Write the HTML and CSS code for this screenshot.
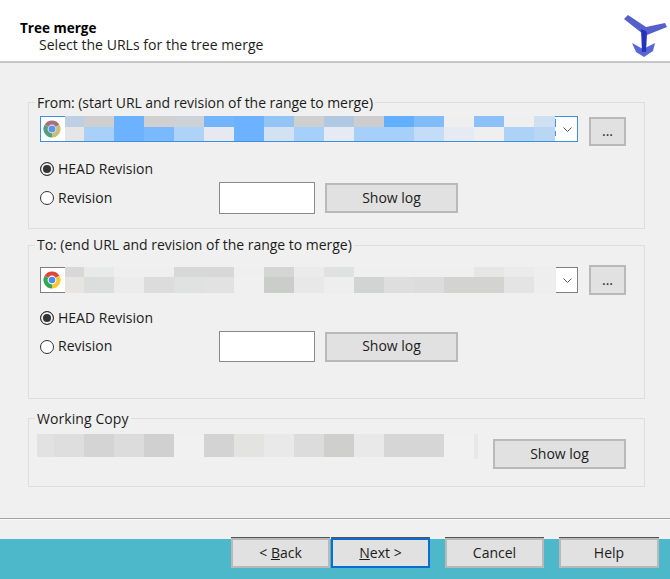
FILE: index.html
```html
<!DOCTYPE html>
<html lang="en">
<head>
<meta charset="utf-8">
<title>Tree merge</title>
<link rel="stylesheet" href="styles.css">
</head>
<body>
<div class="wizard">
  <header class="header">
    <div class="heading">
      <div class="title">Tree merge</div>
      <div class="subtitle">Select the URLs for the tree merge</div>
    </div>
    <svg class="logo" width="44" height="44" viewBox="0 0 44 44">
      <path class="logo-arm" d="M0 5 L4 1 L22 13 L41 9 L43 13 L23 21 L19 20 Z"/>
      <path class="logo-head" d="M8 29 L19 35 L31 29 L29 37 L20 43 L12 38 Z"/>
      <path class="logo-stem" d="M17 15 L22 17 L23 19 L22 38 L18 38 Z"/>
    </svg>
  </header>

  <main class="content">
    <section class="group group-from">
      <div class="legend legend-from">From: (start URL and revision of the range to merge)</div>
      <div class="url-row row-from">
        <div class="combo combo-focus">
          <span class="combo-icon">
            <svg class="chrome chrome-muted" width="24" height="24" viewBox="0 0 24 24">
              <path class="c-red" d="M11 12 L3.6 7.75 A8.5 8.5 0 0 1 18.4 7.75 Z"/>
              <path class="c-green" d="M11 12 L3.6 7.75 A8.5 8.5 0 0 0 11 20.5 Z"/>
              <path class="c-yellow" d="M11 12 L18.4 7.75 A8.5 8.5 0 0 1 11 20.5 Z"/>
              <circle class="c-ring" cx="11" cy="12" r="4.4"/>
              <circle class="c-blue" cx="11" cy="12" r="3.3"/>
            </svg>
          </span>
          <svg class="mosaic mosaic-from" width="492" height="25" viewBox="0 0 492 25" shape-rendering="crispEdges">
            <rect x="0" y="0" width="19" height="11" fill="#bfcfe3"/><rect x="19" y="0" width="30" height="11" fill="#cfcfcf"/><rect x="49" y="0" width="30" height="11" fill="#6cb2ff"/><rect x="79" y="0" width="30" height="11" fill="#d0d0d0"/><rect x="109" y="0" width="30" height="11" fill="#cdd2d8"/><rect x="139" y="0" width="30" height="11" fill="#72b5fc"/><rect x="169" y="0" width="30" height="11" fill="#6cb2ff"/><rect x="199" y="0" width="30" height="11" fill="#94c4f5"/><rect x="229" y="0" width="30" height="11" fill="#cfcfcf"/><rect x="259" y="0" width="30" height="11" fill="#b0c9e3"/><rect x="289" y="0" width="30" height="11" fill="#cdcdcd"/><rect x="319" y="0" width="30" height="11" fill="#62aeff"/><rect x="349" y="0" width="30" height="11" fill="#80bcfa"/><rect x="379" y="0" width="30" height="11" fill="#efefef"/><rect x="409" y="0" width="30" height="11" fill="#8bc0f8"/><rect x="439" y="0" width="30" height="11" fill="#efefef"/><rect x="469" y="0" width="21" height="11" fill="#cfe0f3"/>
            <rect x="0" y="11" width="19" height="14" fill="#e6e6e6"/><rect x="19" y="11" width="30" height="14" fill="#a9d0f9"/><rect x="49" y="11" width="30" height="14" fill="#6cb2ff"/><rect x="79" y="11" width="30" height="14" fill="#7ab9fd"/><rect x="109" y="11" width="30" height="14" fill="#aed2f8"/><rect x="139" y="11" width="30" height="14" fill="#e6eaf0"/><rect x="169" y="11" width="30" height="14" fill="#6cb2ff"/><rect x="199" y="11" width="30" height="14" fill="#d3e2f2"/><rect x="229" y="11" width="30" height="14" fill="#a6cff9"/><rect x="259" y="11" width="30" height="14" fill="#e6ebf3"/><rect x="289" y="11" width="60" height="14" fill="#a6cff9"/><rect x="349" y="11" width="30" height="14" fill="#c3dcf7"/><rect x="379" y="11" width="30" height="14" fill="#e6ebf3"/><rect x="409" y="11" width="30" height="14" fill="#efefef"/><rect x="439" y="11" width="30" height="14" fill="#aed2f7"/><rect x="469" y="11" width="21" height="14" fill="#b9d6f5"/>
            <rect x="490" y="3" width="1" height="8" fill="#3c96ff"/><rect x="490" y="15" width="1" height="5" fill="#3c96ff"/>
          </svg>
          <span class="combo-arrow"><svg width="9" height="5" viewBox="0 0 9 5"><path class="chevron" d="M.5 .5 L4.5 4.5 L8.5 .5"/></svg></span>
        </div>
        <button class="btn btn-more"><span class="btn-text">...</span></button>
      </div>
      <div class="radio-row">
        <label class="radio-label"><input class="radio" type="radio" name="from" checked><span class="radio-text">HEAD Revision</span></label>
      </div>
      <div class="revision-row">
        <label class="radio-label revision-label"><input class="radio" type="radio" name="from"><span class="radio-text">Revision</span></label>
        <input class="edit edit-from" type="text">
        <button class="btn btn-log"><span class="btn-text">Show log</span></button>
      </div>
    </section>

    <section class="group group-to">
      <div class="legend legend-to">To: (end URL and revision of the range to merge)</div>
      <div class="url-row row-to">
        <div class="combo combo-idle">
          <span class="combo-icon">
            <svg class="chrome" width="24" height="24" viewBox="0 0 24 24">
              <path class="c-red" d="M11 12 L3.6 7.75 A8.5 8.5 0 0 1 18.4 7.75 Z"/>
              <path class="c-green" d="M11 12 L3.6 7.75 A8.5 8.5 0 0 0 11 20.5 Z"/>
              <path class="c-yellow" d="M11 12 L18.4 7.75 A8.5 8.5 0 0 1 11 20.5 Z"/>
              <circle class="c-ring" cx="11" cy="12" r="4.4"/>
              <circle class="c-blue" cx="11" cy="12" r="3.3"/>
            </svg>
          </span>
          <svg class="mosaic mosaic-to" width="492" height="26" viewBox="0 0 492 26" shape-rendering="crispEdges">
            <rect x="0" y="0" width="19" height="10" fill="#d8d8d8"/><rect x="19" y="0" width="30" height="10" fill="#e8eaea"/><rect x="49" y="0" width="60" height="10" fill="#efefef"/><rect x="109" y="0" width="60" height="10" fill="#d8d8d8"/><rect x="169" y="0" width="30" height="10" fill="#efefef"/><rect x="199" y="0" width="30" height="10" fill="#d5d5d5"/><rect x="229" y="0" width="30" height="10" fill="#ebebeb"/><rect x="259" y="0" width="30" height="10" fill="#e0e2e1"/><rect x="289" y="0" width="120" height="10" fill="#efefef"/><rect x="409" y="0" width="30" height="10" fill="#e6e6e6"/><rect x="439" y="0" width="30" height="10" fill="#ebebeb"/><rect x="469" y="0" width="22" height="10" fill="#eeeeee"/>
            <rect x="0" y="10" width="19" height="16" fill="#e6e5e2"/><rect x="19" y="10" width="30" height="16" fill="#dcdedd"/><rect x="49" y="10" width="30" height="16" fill="#ececec"/><rect x="79" y="10" width="30" height="16" fill="#dcdcdc"/><rect x="109" y="10" width="30" height="16" fill="#e0e1e1"/><rect x="139" y="10" width="30" height="16" fill="#e2e2e2"/><rect x="169" y="10" width="30" height="16" fill="#f0f0f0"/><rect x="199" y="10" width="30" height="16" fill="#cbcdcb"/><rect x="229" y="10" width="30" height="16" fill="#e8e8e8"/><rect x="259" y="10" width="30" height="16" fill="#eeeeee"/><rect x="289" y="10" width="30" height="16" fill="#d2d4d3"/><rect x="319" y="10" width="30" height="16" fill="#dedede"/><rect x="349" y="10" width="30" height="16" fill="#dcdcdc"/><rect x="379" y="10" width="60" height="16" fill="#d3d3d2"/><rect x="439" y="10" width="30" height="16" fill="#e4e4e4"/><rect x="469" y="10" width="22" height="16" fill="#eeeeee"/>
          </svg>
          <span class="combo-arrow"><svg width="9" height="5" viewBox="0 0 9 5"><path class="chevron" d="M.5 .5 L4.5 4.5 L8.5 .5"/></svg></span>
        </div>
        <button class="btn btn-more"><span class="btn-text">...</span></button>
      </div>
      <div class="radio-row">
        <label class="radio-label"><input class="radio" type="radio" name="to" checked><span class="radio-text">HEAD Revision</span></label>
      </div>
      <div class="revision-row">
        <label class="radio-label revision-label"><input class="radio" type="radio" name="to"><span class="radio-text">Revision</span></label>
        <input class="edit edit-to" type="text">
        <button class="btn btn-log"><span class="btn-text">Show log</span></button>
      </div>
    </section>

    <section class="group group-wc">
      <div class="legend legend-wc">Working Copy</div>
      <div class="wc-row">
        <svg class="wc-path" width="441" height="25" viewBox="0 0 441 25" shape-rendering="crispEdges">
          <rect x="0" y="0" width="17" height="23" fill="#e2e2e2"/><rect x="17" y="0" width="30" height="23" fill="#dedede"/><rect x="47" y="0" width="30" height="23" fill="#d4d4d4"/><rect x="77" y="0" width="30" height="23" fill="#dcdcdc"/><rect x="107" y="0" width="30" height="23" fill="#cfd0cf"/><rect x="137" y="0" width="30" height="25" fill="#f1f1f1"/><rect x="167" y="0" width="30" height="23" fill="#d2d3d2"/><rect x="197" y="0" width="30" height="23" fill="#e3e3e1"/><rect x="227" y="0" width="30" height="23" fill="#e9e9e9"/><rect x="257" y="0" width="30" height="23" fill="#dcdcdc"/><rect x="287" y="0" width="30" height="23" fill="#cfcfcd"/><rect x="317" y="0" width="30" height="23" fill="#e9e9e9"/><rect x="347" y="0" width="60" height="23" fill="#d5d6d5"/><rect x="407" y="0" width="30" height="25" fill="#f1f1f1"/><rect x="437" y="0" width="4" height="25" fill="#e8e8e8"/>
        </svg>
        <button class="btn btn-log btn-wc"><span class="btn-text">Show log</span></button>
      </div>
    </section>
  </main>

  <div class="gutter"></div>
  <footer class="footer">
    <button class="btn btn-nav"><span class="btn-text">&lt; <u>B</u>ack</span></button>
    <button class="btn btn-nav btn-default"><span class="btn-text"><u>N</u>ext &gt;</span></button>
    <button class="btn btn-nav btn-cancel"><span class="btn-text">Cancel</span></button>
    <button class="btn btn-nav btn-help"><span class="btn-text">Help</span></button>
  </footer>
</div>
</body>
</html>
```
FILE: styles.css
```css
* { box-sizing: border-box; }
html, body { margin: 0; height: 100%; overflow: hidden; }
body {
  font-family: "Open Sans", "Noto Sans", "Liberation Sans", sans-serif;
  font-size: 14px;
  line-height: 19px;
  color: #1c1c1c;
  background: #f0f0f0;
}
.wizard { display: flex; flex-direction: column; height: 579px; }

.header {
  height: 63px;
  flex: none;
  background: #fff;
  border-bottom: 2px solid #c6c6c6;
  display: flex;
  justify-content: space-between;
  padding: 19px 2px 0 20px;
}
.title { font-weight: 700; font-size: 13.5px; color: #000; }
.subtitle { padding-left: 19px; margin-top: -3px; letter-spacing: 0.03px; }
.logo { margin-top: -5px; }
.logo-arm { fill: #5560cc; }
.logo-head { fill: #5a66d2; }
.logo-stem { fill: #2433bd; }

.content { flex: 1; padding: 39px 25px 0 28px; }
.group { border: 1px solid #dedede; }
.group-from { height: 127px; }
.group-to { height: 154px; margin-top: 16px; }
.group-wc { height: 69px; margin-top: 19px; }

.legend {
  width: fit-content;
  margin: -10px 0 0 6px;
  padding: 0 2px;
  background: #f0f0f0;
}
.legend-from { letter-spacing: -0.06px; }
.legend-to { margin-top: -11px; letter-spacing: -0.02px; }
.legend-wc { letter-spacing: 0.08px; }

.url-row { display: flex; align-items: flex-start; gap: 11px; padding-left: 11px; }
.row-from { margin-top: 4px; }
.row-from .btn-more { margin-top: 1px; }
.row-to { margin-top: 11px; }
.row-to .combo { margin-top: 2px; }

.combo {
  width: 538px;
  height: 26px;
  display: flex;
  background: #fff;
  border: 1px solid #7a7a7a;
}
.combo-focus { border-color: #3f90dc; }
.combo-idle { border-color: #7f7f7f; }
.combo-icon { width: 24px; flex: none; display: block; }
.chrome, .mosaic, .wc-path { display: block; flex: none; }
.mosaic-from { margin-top: -1px; }
.mosaic-to { margin: -1px 0; }
.c-red { fill: #e0453a; }
.c-green { fill: #35a654; }
.c-yellow { fill: #f8c82e; }
.c-ring { fill: #fff; }
.c-blue { fill: #4d8bf0; }
.chrome-muted .c-red { fill: #a8707f; }
.chrome-muted .c-green { fill: #4f9f80; }
.chrome-muted .c-yellow { fill: #c9bf72; }
.chrome-muted .c-ring { fill: #d5dce8; }
.chrome-muted .c-blue { fill: #5b95ea; }
.combo-arrow { flex: 1; display: flex; align-items: center; justify-content: center; }
.combo-arrow svg { display: block; }
.chevron { fill: none; stroke: #555; stroke-width: 1; }

.btn {
  font: inherit;
  color: #1c1c1c;
  background: #e1e1e1;
  border: 2px solid #b9b9b9;
  padding: 0;
  margin: 0;
}
.btn-text { display: block; margin-bottom: 2px; }
.btn-more { width: 37px; height: 29px; }
.row-to .btn-more { height: 30px; }

.radio-row { display: flex; align-items: center; height: 20px; margin-top: 13px; padding-left: 11px; }
.revision-row { display: flex; align-items: center; margin-top: 3px; padding-left: 11px; }
.radio-label { display: flex; align-items: center; gap: 4px; }
.radio-text { margin-bottom: 2px; }
.revision-label { width: 179px; flex: none; }
.radio {
  appearance: none;
  width: 14px;
  height: 14px;
  margin: 0;
  border: 1px solid #333;
  border-radius: 50%;
  background: #fff;
  flex: none;
}
.radio:checked { background: #333; box-shadow: inset 0 0 0 2px #f0f0f0; }
.edit {
  width: 96px;
  margin: 0 10px 0 0;
  padding: 0;
  background: #fff;
  border: 1px solid #8a8a8a;
  outline: none;
}
.edit-from { height: 32px; }
.edit-to { height: 31px; }
.btn-log { width: 133px; height: 30px; }

.wc-row { display: flex; align-items: flex-start; padding-left: 8px; margin-top: 6px; }
.btn-wc { margin: 5px 0 0 15px; }

.gutter {
  height: 21px;
  flex: none;
  border-top: 1px solid #a3a3a3;
  box-shadow: inset 0 1px 0 #fafafa;
}
.footer {
  height: 40px;
  flex: none;
  background: #4db8c9;
  display: flex;
  align-items: flex-start;
  padding-left: 231px;
  gap: 1px;
}
.btn-nav {
  width: 99px;
  height: 30px;
  margin-top: -1px;
  box-shadow: 0 -1px 0 #555;
}
.btn-default { border-color: #0a6ed0; }
.btn-cancel { margin-left: 14px; }
.btn-help { margin-left: 14px; width: 100px; }
```
